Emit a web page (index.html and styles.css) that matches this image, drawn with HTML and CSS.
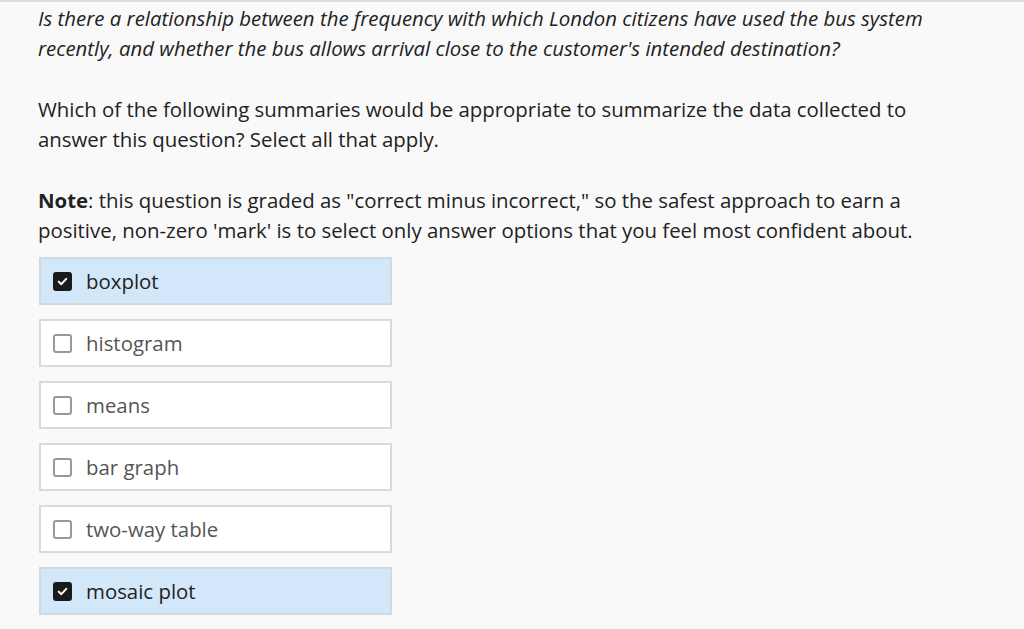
FILE: index.html
```html
<!DOCTYPE html>
<html>
<head>
<meta charset="utf-8">
<link rel="stylesheet" href="styles.css">
</head>
<body>
<div class="page">
  <p class="question">Is there a relationship between the frequency with which London citizens have used the bus system recently, and whether the bus allows arrival close to the customer's intended destination?</p>
  <p class="para">Which of the following summaries would be appropriate to summarize the data collected to answer this question? Select all that apply.</p>
  <p class="para note"><b>Note</b>: this question is graded as "correct minus incorrect," so the safest approach to earn a positive, non-zero 'mark' is to select only answer options that you feel most confident about.</p>
  <div class="options">
    <label class="option checked"><span class="box"><svg viewBox="0 0 18 18" width="18" height="18"><path d="M4.5 9.2 L7.6 12.2 L13.5 5.8" fill="none" stroke="#fff" stroke-width="2.4" stroke-linecap="round" stroke-linejoin="round"/></svg></span><span class="lbl">boxplot</span></label>
    <label class="option"><span class="box"></span><span class="lbl">histogram</span></label>
    <label class="option"><span class="box"></span><span class="lbl">means</span></label>
    <label class="option"><span class="box"></span><span class="lbl">bar graph</span></label>
    <label class="option"><span class="box"></span><span class="lbl">two-way table</span></label>
    <label class="option checked"><span class="box"><svg viewBox="0 0 18 18" width="18" height="18"><path d="M4.5 9.2 L7.6 12.2 L13.5 5.8" fill="none" stroke="#fff" stroke-width="2.4" stroke-linecap="round" stroke-linejoin="round"/></svg></span><span class="lbl">mosaic plot</span></label>
  </div>
</div>
</body>
</html>
```
FILE: styles.css
```css
html, body {
  margin: 0;
  padding: 0;
  background: #f9f9f9;
}
body {
  font-family: "Open Sans", "Noto Sans", sans-serif;
  color: #222;
  font-size: 20.4px;
  line-height: 30px;
  border-top: 2px solid #dcdcdc;
  padding-top: 1px;
}
.page {
  padding: 0 38px;
}
p {
  margin: 0;
}
.question {
  font-style: italic;
  width: 900px;
}
.para {
  margin-top: 31px;
  width: 900px;
}
.note {
  margin-top: 31px;
}
.options {
  display: flex;
  flex-direction: column;
  gap: 14px;
  margin-top: 12px;
  padding-left: 1px;
}
.option {
  box-sizing: border-box;
  width: 353px;
  height: 48px;
  border: 2px solid #dadada;
  background: #fff;
  display: flex;
  align-items: center;
  padding-left: 12px;
  color: #555;
}
.option.checked {
  background: #d3e7fb;
  border-color: #d0d8e0;
  color: #222;
}
.box {
  box-sizing: border-box;
  width: 19px;
  height: 19px;
  border: 2px solid #999;
  border-radius: 3px;
  background: #fff;
  margin-right: 14px;
  display: flex;
  align-items: center;
  justify-content: center;
}
.checked .box {
  background: #1a1a1a;
  border-color: #1a1a1a;
}
.box svg {
  width: 15px;
  height: 15px;
}
```
